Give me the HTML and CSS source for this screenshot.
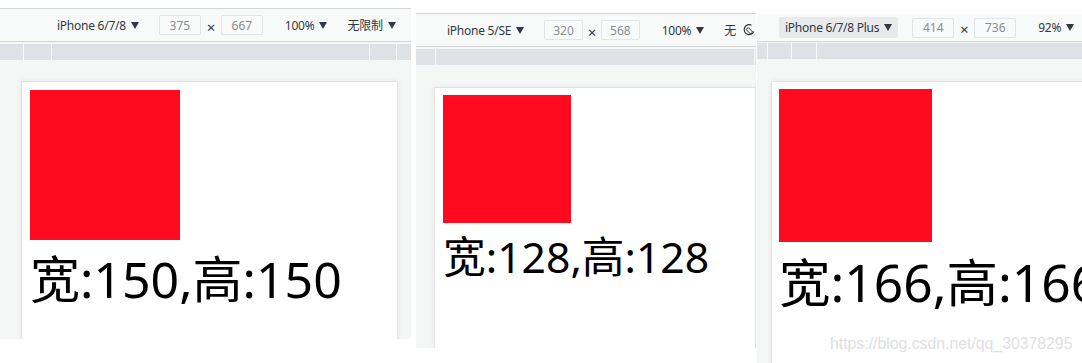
FILE: index.html
```html
<!DOCTYPE html>
<html lang="zh-CN">
<head>
<meta charset="utf-8">
<title>iPhone 尺寸对比</title>
<link rel="stylesheet" href="styles.css">
</head>
<body>
<div class="stage">
  <section class="panel p1">
    <div class="toolbar">
      <span class="device">iPhone 6/7/8 <i class="caret"></i></span>
      <span class="dim">375</span><span class="times">×</span><span class="dim">667</span>
      <span class="zoom">100% <i class="caret"></i></span>
      <span class="throttle">无限制 <i class="caret"></i></span>
    </div>
    <div class="ruler"><span></span><span></span><span></span><span></span><span></span></div>
    <div class="viewport">
      <div class="screen">
        <div class="box"></div>
        <p class="label">宽:150,高:150</p>
      </div>
    </div>
  </section>
  <section class="panel p2">
    <div class="toolbar">
      <span class="device">iPhone 5/SE <i class="caret"></i></span>
      <span class="dim">320</span><span class="times">×</span><span class="dim">568</span>
      <span class="zoom">100% <i class="caret"></i></span>
      <span class="throttle">无</span>
      <svg class="rotate" width="14" height="14" viewBox="0 0 14 14"><path d="M9.5 2.2 A5 5 0 1 0 11.8 8.5" fill="none" stroke="#333" stroke-width="1.2"/><path d="M4.2 6.5 L8.5 11 L10.6 9 L6.3 4.5 Z" fill="none" stroke="#333" stroke-width="1"/></svg>
    </div>
    <div class="ruler"><span></span><span></span><span></span></div>
    <div class="viewport">
      <div class="screen">
        <div class="box"></div>
        <p class="label">宽:128,高:128</p>
      </div>
    </div>
  </section>
  <section class="panel p3">
    <div class="toolbar">
      <span class="device">iPhone 6/7/8 Plus <i class="caret"></i></span>
      <span class="dim">414</span><span class="times">×</span><span class="dim">736</span>
      <span class="zoom">92% <i class="caret"></i></span>
    </div>
    <div class="ruler"><span></span><span></span><span></span><span></span></div>
    <div class="viewport">
      <div class="screen">
        <div class="box"></div>
        <p class="label">宽:166,高:166</p>
      </div>
    </div>
    <span class="watermark">https://blog.csdn.net/qq_30378295</span>
  </section>
</div>
</body>
</html>
```
FILE: styles.css
```css
html, body {
  margin: 0;
  padding: 0;
  background: #ffffff;
}

.stage {
  display: flex;
  align-items: flex-start;
  width: 1082px;
  height: 363px;
  overflow: hidden;
}

.panel {
  position: relative;
  flex: none;
  overflow: hidden;
  background: #f5f6f6;
  display: flex;
  flex-direction: column;
}

.p1 { width: 411px; height: 331px; margin-top: 8px; }
.p2 { width: 340px; height: 335px; margin-top: 13px; margin-left: 5px; }
.p3 { width: 325px; height: 349px; margin-top: 14px; margin-left: 1px; }

/* toolbar */
.toolbar {
  flex: none;
  display: flex;
  align-items: center;
  height: 32px;
  box-sizing: content-box;
  border-top: 1px solid #d3d5d7;
  border-bottom: 1px solid #d3d5d7;
  background: #f8f9f9;
  font-family: "Noto Sans", "Noto Sans CJK SC", sans-serif;
  font-size: 12px;
  letter-spacing: -0.25px;
  color: #303942;
  white-space: nowrap;
}
.p1 .toolbar { padding-left: 57px; }
.p2 .toolbar { padding-left: 31px; }
.p3 .toolbar { padding-left: 22px; height: 27px; border-top: 0; }

.device {
  display: inline-flex;
  align-items: center;
  gap: 5px;
  margin-right: 20px;
}
.p3 .device {
  background: #e9eaec;
  border-radius: 2px;
  height: 21px;
  padding: 0 6px;
  margin-right: 14px;
}

.caret {
  display: inline-block;
  width: 0;
  height: 0;
  border-left: 4px solid transparent;
  border-right: 4px solid transparent;
  border-top: 7px solid #303942;
}

.dim {
  display: inline-flex;
  align-items: center;
  justify-content: center;
  width: 40px;
  height: 18px;
  border: 1px solid #e3e4e6;
  border-radius: 2px;
  background: #f9fafa;
  color: #8a8d91;
  letter-spacing: 0;
}
.times {
  width: 20px;
  text-align: center;
  font-size: 15px;
  padding-top: 3px;
}
.zoom {
  display: inline-flex;
  align-items: center;
  gap: 5px;
  margin-left: 22px;
}
.throttle {
  display: inline-flex;
  align-items: center;
  gap: 5px;
  margin-left: 20px;
}
.rotate {
  margin-left: 6px;
  flex: none;
}

/* ruler */
.ruler {
  flex: none;
  display: grid;
  column-gap: 1px;
  height: 16px;
  margin-top: 2px;
  background: #f8f9f9;
}
.ruler span { background: #dee1e6; }
.p1 .ruler { grid-template-columns: 23px 27px 317px 26px 1fr; }
.p2 .ruler { grid-template-columns: 19px 318px 1fr; }
.p3 .ruler { grid-template-columns: 10px 23px 24px 1fr; margin-top: 1px; }

/* viewport + screen */
.viewport {
  flex: 1;
  min-height: 0;
  display: flex;
  align-items: flex-start;
}
.p1 .viewport { padding: 21px 0 0 21px; }
.p2 .viewport { padding: 22px 0 0 18px; }
.p3 .viewport { padding: 22px 0 0 14px; }

.screen {
  flex: none;
  background: #ffffff;
  border: 1px solid #e2e3e4;
  box-shadow: 0 0 5px rgba(0, 0, 0, 0.07);
  padding: 8px;
  height: 400px;
  box-sizing: border-box;
}
.p1 .screen { width: 377px; }
.p2 .screen { width: 322px; padding-top: 7px; }
.p3 .screen { width: 383px; padding: 7px; }

.box { background: #ff0a1e; }
.p1 .box { width: 150px; height: 150px; }
.p2 .box { width: 128px; height: 128px; }
.p3 .box { width: 153px; height: 153px; }

.label {
  margin: 0;
  font-family: "Noto Sans", "Noto Sans CJK SC", sans-serif;
  color: #000;
  white-space: nowrap;
  line-height: normal;
}
.p1 .label { font-size: 50px; }
.p2 .label { font-size: 42.7px; }
.p3 .label { font-size: 51.5px; }

.watermark {
  position: absolute;
  left: 73px;
  top: 321px;
  font-family: "Liberation Sans", Arial, sans-serif;
  font-size: 15.8px;
  color: #e0e0e0;
  white-space: nowrap;
}
```
